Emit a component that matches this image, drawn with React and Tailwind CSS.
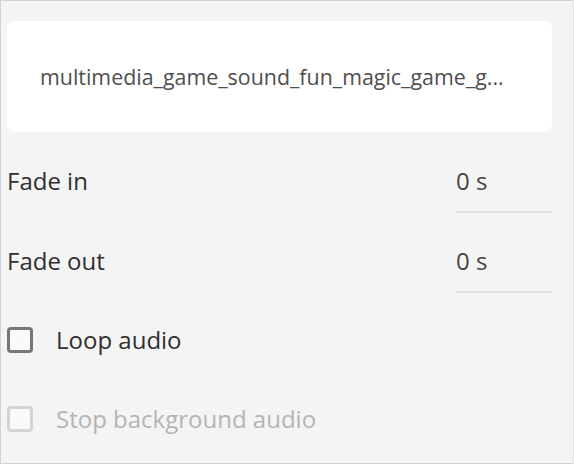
export default function App() {
  return (
    <div className="w-[574px] h-[464px] overflow-hidden bg-[#f4f4f4] border border-[#d2d2d2] border-r-[#e4e4e4] pl-[6px] pr-[21px] pt-[20px] font-['Open_Sans',sans-serif]">
      <div className="h-[111px] bg-white rounded-[8px] flex items-center pl-[33px] pr-[16px]">
        <span className="text-[21.4px] leading-[28px] text-[#4e4e4e] whitespace-nowrap">
          multimedia_game_sound_fun_magic_game_g...
        </span>
      </div>

      <FadeRow label="Fade in" value="0 s" top="pt-[34px]" />
      <FadeRow label="Fade out" value="0 s" top="pt-[33px]" />

      <div className="pt-[32px] flex items-center gap-[23px] h-[62px]">
        <Box />
        <span className="text-[24px] leading-[30px] text-[#2f2f2f]">Loop audio</span>
      </div>
      <div className="mt-[49px] flex items-center gap-[23px] h-[30px]">
        <Box disabled />
        <span className="text-[24px] leading-[30px] text-[#b4b4b4]">Stop background audio</span>
      </div>
    </div>
  );
}

function FadeRow({ label, value, top }) {
  return (
    <div className={`${top} flex justify-between items-start`}>
      <span className="text-[24px] leading-[30px] text-[#2f2f2f]">{label}</span>
      <div className="w-[96px] pb-[15px] border-b-2 border-[#e2e2e2]">
        <span className="text-[24px] leading-[30px] text-[#454545]">{value}</span>
      </div>
    </div>
  );
}

function Box({ disabled }) {
  return (
    <span
      className={
        disabled
          ? "block w-[26px] h-[26px] rounded-[4px] border-[3px] border-[#d4d4d4] bg-[#fafafa]"
          : "block w-[26px] h-[26px] rounded-[4px] border-[3px] border-[#767676] bg-[#fafafa]"
      }
    />
  );
}
